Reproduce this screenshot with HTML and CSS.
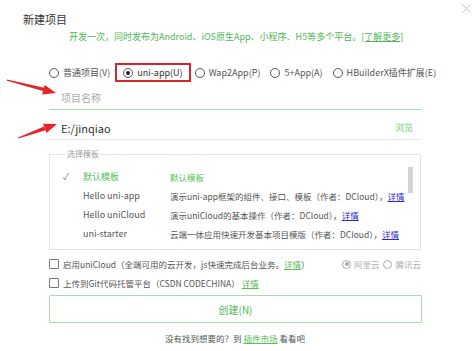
FILE: index.html
```html
<!DOCTYPE html>
<html>

<head>
    <meta charset="utf-8">
    <title>新建项目</title>
    <link rel="stylesheet" href="styles.css">
</head>

<body>
    <div class="dialog">
        <header class="head">
            <h1>新建项目</h1>
            <svg class="close" width="9" height="9" viewBox="0 0 9 9">
                <path d="M0.5 0.5 L8.5 8.5 M8.5 0.5 L0.5 8.5" stroke="#c4c4c4" stroke-width="1" />
            </svg>
        </header>

        <p class="intro">开发一次，同时发布为Android、iOS原生App、小程序、H5等多个平台。<a href="#">[了解更多]</a></p>

        <div class="types">
            <label class="opt"><span class="radio"></span>普通项目(V)</label>
            <label class="opt marked"><span class="radio on"></span>uni-app(U)</label>
            <label class="opt"><span class="radio"></span>Wap2App(P)</label>
            <label class="opt"><span class="radio"></span>5+App(A)</label>
            <label class="opt"><span class="radio"></span>HBuilderX插件扩展(E)</label>
        </div>

        <div class="field name">
            <span class="placeholder">项目名称</span>
        </div>

        <div class="field path">
            <span class="value">E:/jinqiao</span>
            <a class="browse" href="#">浏览</a>
        </div>

        <fieldset class="templates">
            <legend>选择模板</legend>
            <div class="list">
                <div class="row current">
                    <span class="tick">✓</span>
                    <span>默认模板</span>
                    <span class="desc">默认模板</span>
                </div>
                <div class="row">
                    <span class="tick"></span>
                    <span>Hello uni-app</span>
                    <span class="desc">演示uni-app框架的组件、接口、模板（作者：DCloud），<a href="#">详情</a></span>
                </div>
                <div class="row">
                    <span class="tick"></span>
                    <span>Hello uniCloud</span>
                    <span class="desc">演示uniCloud的基本操作（作者：DCloud），<a href="#">详情</a></span>
                </div>
                <div class="row">
                    <span class="tick"></span>
                    <span>uni-starter</span>
                    <span class="desc">云端一体应用快速开发基本项目模版（作者：DCloud），<a href="#">详情</a></span>
                </div>
            </div>
            <div class="scrollbar"></div>
        </fieldset>

        <div class="check-row">
            <span class="box"></span>
            <span class="label">启用uniCloud（全端可用的云开发，js快速完成后台业务。<a class="green" href="#">详情</a>）</span>
            <span class="cloud">
                <span class="radio small on grey"></span>阿里云
                <span class="radio small"></span>腾讯云
            </span>
        </div>

        <div class="check-row">
            <span class="box"></span>
            <span class="label">上传到Git代码托管平台（CSDN CODECHINA） <a class="green" href="#">详情</a></span>
        </div>

        <button class="create">创建(N)</button>

        <p class="foot">没有找到想要的？到 <a href="#">插件市场</a> 看看吧</p>

        <svg class="arrows" width="474" height="351" viewBox="0 0 474 351">
            <polygon points="7,79.5 44.3,87.8 43.6,91.3 7,80.8" fill="#e3262a" />
            <polygon points="56,93 44.7,84.9 42.1,94.5" fill="#e3262a" />
            <polygon points="18,137.5 44,126.5 45.6,130.3 18.4,138.6" fill="#e3262a" />
            <polygon points="57,124 43.1,123.7 46.5,133.1" fill="#e3262a" />
        </svg>
    </div>
</body>

</html>
```

FILE: styles.css
```css
* {
    box-sizing: border-box;
}

body {
    margin: 0;
    background: #ffffff;
    font-family: "Noto Sans CJK SC", "Noto Sans", sans-serif;
    color: #444;
}

a {
    text-decoration: underline;
}

.dialog {
    position: relative;
    width: 474px;
    height: 351px;
    padding-left: 49px;
}

.head {
    display: flex;
    justify-content: space-between;
    margin-left: -26px;
    padding-top: 12px;
    width: 448px;
}

.head h1 {
    margin: 0;
    font-size: 11px;
    line-height: 14px;
    font-weight: normal;
    color: #333;
}

.close {
    margin-top: -8px;
}

.intro {
    margin: 5px 0 0;
    width: 372px;
    padding-left: 20px;
    font-size: 9px;
    line-height: 12px;
    color: #4fb654;
    white-space: nowrap;
}

.intro a {
    color: #4fb654;
}

.types {
    display: flex;
    align-items: center;
    margin-top: 20px;
    height: 19px;
    font-size: 9px;
    color: #555;
    white-space: nowrap;
}

.opt {
    display: flex;
    align-items: center;
    margin-right: 10px;
}

.opt.marked {
    height: 19px;
    margin: 0 4px 0 -5px;
    padding: 0 6px;
    border: 2px solid #d9252a;
    color: #333;
}

.radio {
    display: inline-block;
    width: 10px;
    height: 10px;
    margin-right: 4px;
    border: 1px solid #555;
    border-radius: 50%;
    position: relative;
    flex: none;
}

.radio.on::after {
    content: "";
    position: absolute;
    left: 2px;
    top: 2px;
    width: 4px;
    height: 4px;
    border-radius: 50%;
    background: #222;
}

.radio.small {
    width: 9px;
    height: 9px;
    margin: 0 3px 0 0;
    border-color: #aaa;
    vertical-align: -1px;
}

.radio.small.on::after {
    left: 1.5px;
    top: 1.5px;
    width: 4px;
    height: 4px;
    background: #aaa;
}

.field {
    display: flex;
    justify-content: space-between;
    width: 372px;
    padding: 0 8px 3px 12px;
    font-size: 10px;
    line-height: 16px;
}

.field.name {
    padding-top: 8px;
    border-bottom: 1px solid #a8dba8;
}

.placeholder {
    color: #aaa;
}

.field.path {
    padding-top: 10px;
    border-bottom: 1px solid #e6e6e6;
}

.value {
    font-size: 11px;
    color: #333;
}

.browse {
    color: #7ccb7c;
    text-decoration: none;
    font-size: 9px;
}

.templates {
    position: relative;
    margin: 8px 0 0;
    padding: 7px 0 5px 13px;
    width: 372px;
    height: 102px;
    border: 1px solid #e4e4e4;
}

.templates legend {
    margin-left: 3px;
    padding: 0 1px;
    font-size: 8px;
    line-height: 12px;
    color: #a0a0a0;
}

.row {
    display: grid;
    grid-template-columns: 20px 87px 1fr;
    height: 19px;
    align-items: center;
    font-size: 9px;
    color: #555;
    white-space: nowrap;
}

.row .desc {
    font-size: 8.5px;
}

.row.current {
    color: #59be5c;
}

.tick {
    color: #888;
    font-size: 9px;
}

.row a {
    color: #2b2bd4;
}

.scrollbar {
    position: absolute;
    right: 7px;
    top: 7px;
    width: 5px;
    height: 26px;
    background: #d4d4d4;
}

.check-row {
    display: flex;
    align-items: center;
    width: 372px;
    height: 19px;
    font-size: 8.5px;
    color: #555;
    white-space: nowrap;
}

.templates + .check-row {
    margin-top: 4px;
}

.box {
    width: 10px;
    height: 10px;
    margin-right: 4px;
    border: 1px solid #777;
    border-radius: 1px;
}

.green {
    color: #59be5c;
}

.cloud {
    margin-left: auto;
    color: #b0b0b0;
}

.cloud .radio.small:last-of-type {
    margin-left: 2px;
}

.create {
    display: block;
    margin-top: 3px;
    width: 373px;
    height: 28px;
    background: #ffffff;
    border: 1px solid #a8dca8;
    border-radius: 1px;
    font-family: inherit;
    font-size: 10px;
    color: #4fb654;
}

.foot {
    margin: 8px 0 0;
    width: 372px;
    text-align: center;
    font-size: 8.5px;
    line-height: 14px;
    color: #555;
}

.foot a {
    color: #59be5c;
}

.arrows {
    position: absolute;
    left: 0;
    top: 0;
    pointer-events: none;
}
```
